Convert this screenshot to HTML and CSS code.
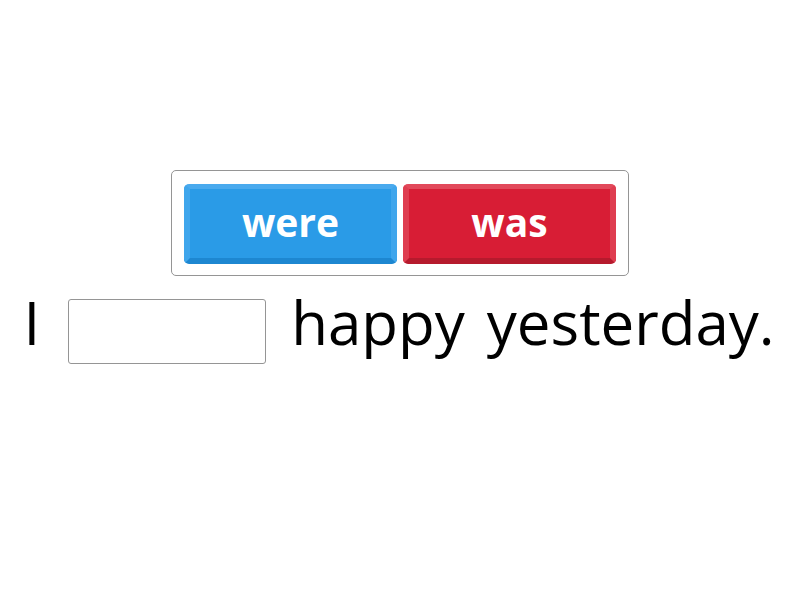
FILE: index.html
```html
<!DOCTYPE html>
<html>
<head>
<meta charset="utf-8">
<link rel="stylesheet" href="styles.css">
</head>
<body>
<main class="page">
  <div class="tray">
    <div class="tile tile-blue">were</div>
    <div class="tile tile-red">was</div>
  </div>
  <div class="sentence">
    <span class="word word-i">I</span>
    <span class="slot"></span>
    <span class="word word-happy">happy</span>
    <span class="word">yesterday.</span>
  </div>
</main>
</body>
</html>
```
FILE: styles.css
```css
html, body {
  margin: 0;
  padding: 0;
  background: #ffffff;
}
.page {
  width: 800px;
  height: 600px;
  padding-top: 170px;
  box-sizing: border-box;
  font-family: "Open Sans", sans-serif;
  display: flex;
  flex-direction: column;
  align-items: center;
}
.tray {
  width: 458px;
  height: 106px;
  box-sizing: border-box;
  border: 1px solid #959595;
  border-radius: 5px;
  padding: 13px 12px 0 12px;
  display: flex;
  gap: 6px;
}
.tile {
  width: 213px;
  height: 80px;
  box-sizing: border-box;
  border-radius: 5px;
  border-width: 5px 6px 6px 6px;
  border-style: solid;
  display: flex;
  align-items: center;
  justify-content: center;
  color: #ffffff;
  font-weight: 700;
  font-size: 39px;
  line-height: 1;
  padding-bottom: 5px;
}
.tile-blue {
  background: #2a9be7;
  border-color: #4aaaee #3fa6ec #1d87d1 #3fa6ec;
}
.tile-red {
  background: #d81d35;
  border-color: #e2495b #df3d50 #b61a2d #df3d50;
}
.sentence {
  margin-top: 5px;
  margin-left: -2px;
  display: flex;
  align-items: flex-start;
  font-size: 60px;
  line-height: 82px;
  color: #000000;
}
.word-i {
  margin-right: 28px;
}
.slot {
  width: 198px;
  height: 65px;
  box-sizing: border-box;
  border: 1px solid #959595;
  border-radius: 3px;
  margin-top: 18px;
  margin-right: 25px;
}
.word-happy {
  margin-right: 22px;
}
```
